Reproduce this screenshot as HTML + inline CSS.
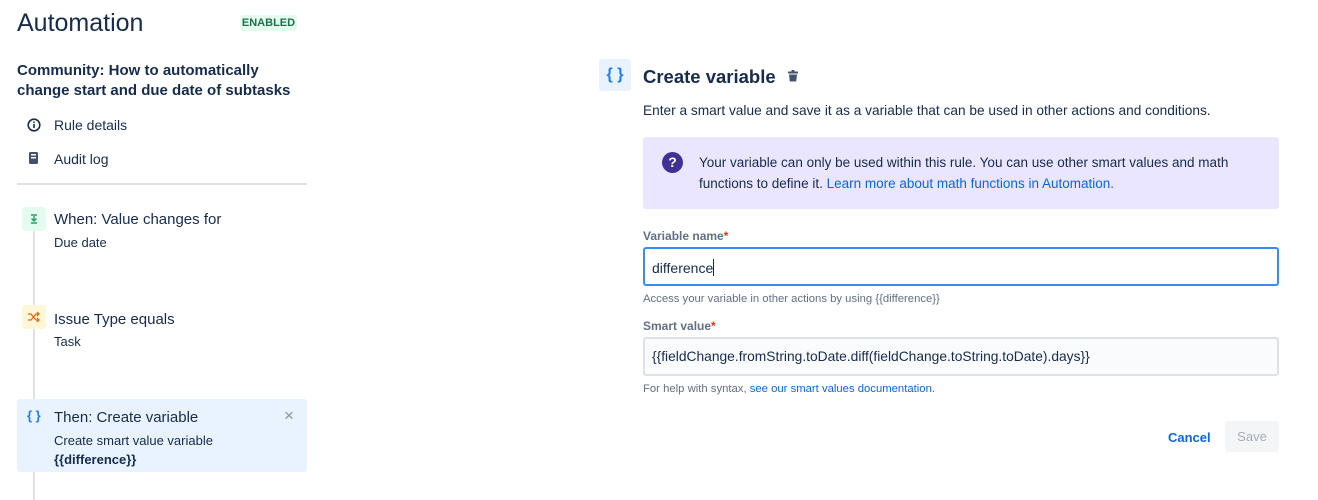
<!DOCTYPE html>
<html><head><meta charset="utf-8"><style>
*{margin:0;padding:0;box-sizing:border-box}
body{width:1318px;height:500px;background:#fff;font-family:"Liberation Sans",sans-serif;color:#172b4d;position:relative;overflow:hidden}
.a{position:absolute;white-space:nowrap}
</style></head><body>
<div class="a" style="left:17px;top:9px;font-size:25px;color:#172b4d">Automation</div>
<div class="a" style="left:240px;top:15px;width:57px;height:16px;background:#e3fcef;border-radius:3px;color:#216e4e;font-size:11px;font-weight:bold;text-align:center;line-height:16px">ENABLED</div>
<div class="a" style="left:17px;top:61px;font-size:15px;line-height:20px;font-weight:600;color:#172b4d">Community: How to automatically<br>change start and due date of subtasks</div>
<svg class="a" style="left:27px;top:118px" width="14" height="14" viewBox="0 0 14 14"><circle cx="7" cy="7" r="5.8" fill="none" stroke="#172b4d" stroke-width="1.6"/><rect x="6.2" y="6" width="1.6" height="4" fill="#172b4d"/><circle cx="7" cy="4.3" r="0.9" fill="#172b4d"/></svg>
<div class="a" style="left:54px;top:117px;font-size:14px;color:#172b4d">Rule details</div>
<svg class="a" style="left:28px;top:151px" width="12" height="14" viewBox="0 0 12 14"><rect x="1" y="1" width="9" height="12" rx="1.5" fill="#42526e"/><rect x="3" y="3" width="5" height="1.5" fill="#fff"/><rect x="3" y="6" width="5" height="1.5" fill="#fff"/></svg>
<div class="a" style="left:54px;top:151px;font-size:14px;color:#172b4d">Audit log</div>
<div class="a" style="left:17px;top:183px;width:290px;height:2px;background:#dfe1e6"></div>
<div class="a" style="left:33px;top:225px;width:2px;height:275px;background:#dfe1e6"></div>
<div class="a" style="left:22px;top:207px;width:24px;height:24px;background:#e3fcef;border-radius:3px"></div>
<svg class="a" style="left:28px;top:213px" width="12" height="12" viewBox="0 0 12 12"><path d="M3 2h6M6 3v5M3.5 5.5L6 8l2.5-2.5M3 10h6" stroke="#22a06b" stroke-width="1.4" fill="none"/></svg>
<div class="a" style="left:54px;top:211px;font-size:15px">When: Value changes for</div>
<div class="a" style="left:54px;top:235px;font-size:13px">Due date</div>
<div class="a" style="left:22px;top:305px;width:24px;height:24px;background:#fff7d6;border-radius:3px"></div>
<svg class="a" style="left:27px;top:311px" width="14" height="12" viewBox="0 0 14 12"><path d="M1 3h3l5 6h3M1 9h3l5-6h3M10 1l2 2-2 2M10 7l2 2-2 2" stroke="#e56910" stroke-width="1.3" fill="none"/></svg>
<div class="a" style="left:54px;top:311px;font-size:15px">Issue Type equals</div>
<div class="a" style="left:54px;top:334px;font-size:13px">Task</div>
<div class="a" style="left:17px;top:399px;width:290px;height:73px;background:#e9f2ff;border-radius:3px"></div>
<div class="a" style="left:27px;top:408px;font-size:13px;font-weight:bold;color:#1d7afc">{ }</div>
<div class="a" style="left:54px;top:409px;font-size:15px">Then: Create variable</div>
<div class="a" style="left:54px;top:433px;font-size:13px">Create smart value variable</div>
<div class="a" style="left:54px;top:452px;font-size:13px;font-weight:bold">{{difference}}</div>
<div class="a" style="left:284px;top:406px;font-size:17px;color:#8993a4">×</div>

<div class="a" style="left:599px;top:59px;width:32px;height:32px;background:#e9f2ff;border-radius:3px;color:#1d7afc;font-weight:bold;font-size:16px;text-align:center;line-height:31px">{ }</div>
<div class="a" style="left:643px;top:66px;font-size:18.5px;font-weight:600">Create variable</div>
<svg class="a" style="left:786px;top:69px" width="14" height="14" viewBox="0 0 14 14"><rect x="2" y="2.5" width="10" height="2" fill="#44546f"/><rect x="5.5" y="1" width="3" height="2" fill="#44546f"/><path d="M3 5.5h8l-0.8 7H3.8z" fill="#44546f"/></svg>
<div class="a" style="left:643px;top:103px;font-size:13.7px">Enter a smart value and save it as a variable that can be used in other actions and conditions.</div>
<div class="a" style="left:643px;top:137px;width:636px;height:72px;background:#eae6ff;border-radius:3px"></div>
<div class="a" style="left:662px;top:152px;width:21px;height:21px;border-radius:50%;background:#403294;color:#fff;font-weight:bold;font-size:14px;text-align:center;line-height:21px">?</div>
<div class="a" style="left:699px;top:152px;font-size:13.5px;line-height:21px">Your variable can only be used within this rule. You can use other smart values and math<br>functions to define it. <span style="color:#0c66e4">Learn more about math functions in Automation.</span></div>
<div class="a" style="left:643px;top:229px;font-size:12px;font-weight:bold;color:#626f86">Variable name<span style="color:#de350b">*</span></div>
<div class="a" style="left:643px;top:247px;width:636px;height:39px;border:2px solid #388bff;border-radius:3px"></div>
<div class="a" style="left:652px;top:259px;font-size:14px">difference<span style="display:inline-block;width:1px;height:17px;background:#172b4d;vertical-align:-3px"></span></div>
<div class="a" style="left:643px;top:293px;font-size:11.3px;color:#626f86">Access your variable in other actions by using {{difference}}</div>
<div class="a" style="left:643px;top:319px;font-size:12px;font-weight:bold;color:#626f86">Smart value<span style="color:#de350b">*</span></div>
<div class="a" style="left:643px;top:337px;width:636px;height:39px;border:2px solid #dfe1e6;border-radius:3px;background:#fafbfc"></div>
<div class="a" style="left:652px;top:349px;font-size:13.8px">{{fieldChange.fromString.toDate.diff(fieldChange.toString.toDate).days}}</div>
<div class="a" style="left:643px;top:383px;font-size:11.3px;color:#626f86">For help with syntax, <span style="color:#0c66e4">see our smart values documentation.</span></div>
<div class="a" style="left:1168px;top:430px;font-size:13px;font-weight:bold;color:#0c66e4">Cancel</div>
<div class="a" style="left:1225px;top:421px;width:54px;height:31px;background:#f4f5f7;border-radius:3px;color:#a5adba;font-size:13px;text-align:center;line-height:32px">Save</div>
</body></html>
